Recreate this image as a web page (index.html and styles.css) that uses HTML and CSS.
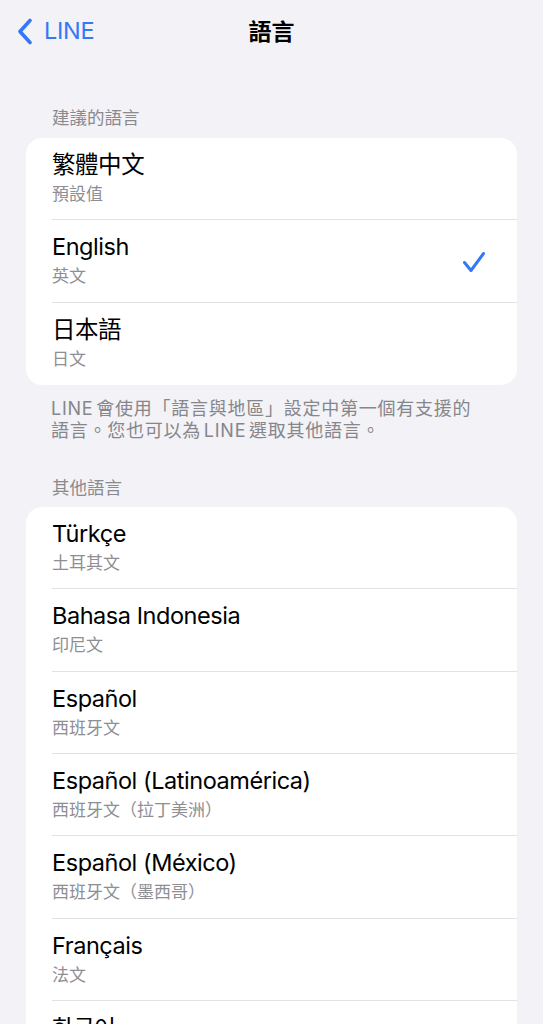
FILE: index.html
```html
<!doctype html>
<html lang="zh-Hant">
    <head>
        <meta charset="utf-8">
        <meta name="viewport" content="width=device-width, initial-scale=1">
        <title>語言</title>
        <link rel="stylesheet" href="styles.css">
    </head>
    <body>
        <div class="navbar">
            <a class="back" href="#">
                <svg class="chevron" width="16" height="27" viewBox="0 0 16 27">
                    <polyline points="13,2.5 3,13.5 13,24.5" fill="none" stroke="currentColor" stroke-width="3.6" stroke-linecap="round" stroke-linejoin="round"/>
                </svg>
                <span>LINE</span>
            </a>
            <div class="title">語言</div>
        </div>

        <div class="section-header">建議的語言</div>
        <div class="group">
            <div class="row">
                <div class="row-body">
                    <div class="text">
                        <div class="name">繁體中文</div>
                        <div class="sub">預設值</div>
                    </div>
                </div>
            </div>
            <div class="row">
                <div class="row-body">
                    <div class="text">
                        <div class="name">English</div>
                        <div class="sub">英文</div>
                    </div>
                    <svg class="check" width="24" height="22" viewBox="0 0 24 22">
                        <polyline points="2.5,11.5 9,19.5 21.5,2.5" fill="none" stroke="currentColor" stroke-width="3" stroke-linecap="round" stroke-linejoin="round"/>
                    </svg>
                </div>
            </div>
            <div class="row">
                <div class="row-body">
                    <div class="text">
                        <div class="name">日本語</div>
                        <div class="sub">日文</div>
                    </div>
                </div>
            </div>
        </div>
        <div class="section-footer">LINE 會使用「語言與地區」設定中第一個有支援的<br>語言。您也可以為 LINE 選取其他語言。</div>

        <div class="section-header other">其他語言</div>
        <div class="group">
            <div class="row">
                <div class="row-body">
                    <div class="text">
                        <div class="name">Türkçe</div>
                        <div class="sub">土耳其文</div>
                    </div>
                </div>
            </div>
            <div class="row">
                <div class="row-body">
                    <div class="text">
                        <div class="name">Bahasa Indonesia</div>
                        <div class="sub">印尼文</div>
                    </div>
                </div>
            </div>
            <div class="row">
                <div class="row-body">
                    <div class="text">
                        <div class="name">Español</div>
                        <div class="sub">西班牙文</div>
                    </div>
                </div>
            </div>
            <div class="row">
                <div class="row-body">
                    <div class="text">
                        <div class="name">Español (Latinoamérica)</div>
                        <div class="sub">西班牙文（拉丁美洲）</div>
                    </div>
                </div>
            </div>
            <div class="row">
                <div class="row-body">
                    <div class="text">
                        <div class="name">Español (México)</div>
                        <div class="sub">西班牙文（墨西哥）</div>
                    </div>
                </div>
            </div>
            <div class="row">
                <div class="row-body">
                    <div class="text">
                        <div class="name">Français</div>
                        <div class="sub">法文</div>
                    </div>
                </div>
            </div>
            <div class="row">
                <div class="row-body">
                    <div class="text">
                        <div class="name">한국어</div>
                        <div class="sub">韓文</div>
                    </div>
                </div>
            </div>
        </div>
    </body>
</html>
```

FILE: styles.css
```css
* {
    margin: 0;
    padding: 0;
    box-sizing: border-box;
}

body {
    background-color: #f2f2f7;
    font-family: Inter, "Noto Sans CJK TC", "Noto Sans CJK KR", sans-serif;
    color: #000;
    overflow: hidden;
}

.navbar {
    height: 62px;
    display: flex;
    align-items: center;
    justify-content: center;
    position: relative;
}

.back {
    position: absolute;
    left: 17px;
    top: 17px;
    display: flex;
    align-items: center;
    gap: 11px;
    color: #3478f6;
    text-decoration: none;
    font-size: 23.5px;
    line-height: 28px;
    letter-spacing: -0.3px;
}

.title {
    font-size: 23px;
    font-weight: 700;
    line-height: 28px;
    margin-top: 1px;
}

.section-header {
    margin: 44px 0 8px 52px;
    font-size: 17.5px;
    line-height: 24px;
    color: #8a8a8e;
}

.section-header.other {
    margin-top: 34px;
    margin-bottom: 7px;
}

.group {
    margin: 0 26px;
    background-color: #fff;
    border-radius: 16px;
    overflow: hidden;
}

.row {
    padding-left: 26px;
}

.row-body {
    height: 82.33px;
    display: flex;
    align-items: center;
    justify-content: space-between;
    padding-right: 31px;
    border-bottom: 1px solid #e2e2e6;
}

.row:last-child .row-body {
    border-bottom: none;
}

.text {
    display: flex;
    flex-direction: column;
    gap: 3px;
    padding-bottom: 2px;
}

.name {
    font-size: 23.5px;
    line-height: 30px;
    letter-spacing: -0.45px;
}

.sub {
    font-size: 17px;
    line-height: 22px;
    color: #8e8e93;
}

.check {
    color: #3478f6;
    margin-top: 2px;
}

.section-footer {
    margin: 13px 10px 0 51px;
    font-size: 18px;
    line-height: 22px;
    letter-spacing: 0.75px;
    word-spacing: -3px;
    color: #86868b;
}
```
